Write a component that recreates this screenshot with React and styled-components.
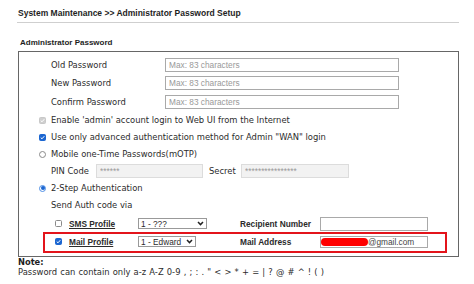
import React from 'react';
import styled, { createGlobalStyle } from 'styled-components';

const Global = createGlobalStyle`
  html, body { margin: 0; padding: 0; background: #fff; }
  body { width: 474px; height: 284px; overflow: hidden; }
`;

const Page = styled.div`
  width: 474px;
  height: 284px;
  box-sizing: border-box;
  padding: 0 15px 0 18px;
  color: #2b2b2b;
  font-family: "DejaVu Sans", Verdana, sans-serif;
`;

const Header = styled.div`
  margin-left: -1px;
  padding: 8px 0 0 1px;
  height: 14px;
  border-bottom: 1px solid #cfcfcf;
  font: bold 8.5px/10px "Liberation Sans", Arial, sans-serif;
  color: #1e1e1e;
  white-space: nowrap;
`;

const SectionTitle = styled.div`
  margin: 15px 0 3px 0;
  padding-left: 2px;
  font: bold 8px/10px "Liberation Sans", Arial, sans-serif;
  color: #1e1e1e;
`;

const Box = styled.div`
  width: 441px;
  box-sizing: border-box;
  border: 1px solid #666;
  padding: 4px 0 3px 0;
`;

const Row = styled.div`
  display: flex;
  align-items: center;
  height: ${p => p.$h}px;
  padding-left: ${p => p.$pl}px;
  margin-top: ${p => p.$mt || 0}px;
  font-size: 8.4px;
  white-space: nowrap;
`;

const Label = styled.span`
  width: ${p => p.$w}px;
  margin-left: ${p => p.$ml || 0}px;
  flex: none;
`;

const TextInput = styled.input`
  box-sizing: border-box;
  width: ${p => p.$w}px;
  height: 14px;
  margin: 0;
  padding: 0 3px;
  border: 1px solid ${p => (p.disabled ? '#dcdcdc' : '#a9a9a9')};
  background: ${p => (p.disabled ? '#f2f2f2' : '#fff')};
  font: 8.3px "Liberation Sans", Arial, sans-serif;
  color: #999;
  outline: none;
  &::placeholder { color: #999; }
`;

const Check = styled.span`
  box-sizing: border-box;
  width: 7px;
  height: 7px;
  flex: none;
  border-radius: 1.5px;
  border: 1px solid ${p => (p.$on ? (p.$dis ? '#c8c8c8' : '#1b66d1') : '#8a8a8a')};
  background: ${p => (p.$on ? (p.$dis ? '#cfcfcf' : '#1b66d1') : '#fff')};
  display: flex;
  align-items: center;
  justify-content: center;
  margin-right: ${p => p.$mr ?? 5}px;
`;

const Radio = styled.span`
  box-sizing: border-box;
  width: 7px;
  height: 7px;
  flex: none;
  border-radius: 50%;
  border: 1px solid ${p => (p.$on ? '#4f8fe6' : '#8a8a8a')};
  background: #fff;
  display: flex;
  align-items: center;
  justify-content: center;
  margin-right: 5px;
  &::after {
    content: '';
    display: ${p => (p.$on ? 'block' : 'none')};
    width: 4px;
    height: 4px;
    border-radius: 50%;
    background: #1b66d1;
  }
`;

const CheckBox = ({ on, dis, mr }) => (
  <Check $on={on} $dis={dis} $mr={mr}>
    {on && (
      <svg width="5" height="5" viewBox="0 0 10 10">
        <polyline points="1.5,5.2 4,7.6 8.6,2.4" fill="none" stroke="#fff" strokeWidth="2" />
      </svg>
    )}
  </Check>
);

const ProfileLink = styled.span`
  width: 69px;
  flex: none;
  font: bold 8.3px "Liberation Sans", Arial, sans-serif;
  text-decoration: underline;
  color: #2b2b2b;
`;

const BoldLabel = styled.span`
  width: ${p => p.$w}px;
  flex: none;
  font: bold 8.3px "Liberation Sans", Arial, sans-serif;
  color: #2b2b2b;
`;

const SelectCell = styled.span`
  width: 102px;
  flex: none;
  display: flex;
  align-items: center;
`;

const Select = styled.span`
  box-sizing: border-box;
  width: ${p => p.$w}px;
  height: 11px;
  border: 1px solid #999;
  display: flex;
  align-items: center;
  justify-content: space-between;
  padding: 0 2px 0 2px;
  font: 8.3px "Liberation Sans", Arial, sans-serif;
  color: #2b2b2b;
`;

const Chevron = () => (
  <svg width="7" height="5" viewBox="0 0 8 6">
    <polyline points="1,1.3 4,4.3 7,1.3" fill="none" stroke="#222" strokeWidth="1.8" />
  </svg>
);

const FakeInput = styled.span`
  box-sizing: border-box;
  width: 108px;
  height: ${p => p.$h}px;
  border: 1px solid #a9a9a9;
  background: #fff;
  display: flex;
  align-items: center;
  font: 8.3px "Liberation Sans", Arial, sans-serif;
  color: #444;
`;

const Redact = styled.span`
  width: 47px;
  height: 8px;
  border-radius: 4px;
  background: #ff0000;
  flex: none;
`;

const RedBox = styled.div`
  margin-left: 24px;
  width: 404px;
  box-sizing: border-box;
  border: 2px solid #e3141b;
  padding: 0 0 2px 10px;
`;

const NoteTitle = styled.div`
  height: 10px;
  font: bold 8.3px/10px "DejaVu Sans", Verdana, sans-serif;
  color: #1e1e1e;
`;

const NoteText = styled.div`
  height: 10px;
  line-height: 10px;
  font-size: 8.4px;
  word-spacing: 0.5px;
  color: #2b2b2b;
  white-space: nowrap;
`;

export default function App() {
  return (
    <>
      <Global />
      <Page>
        <Header>System Maintenance &gt;&gt; Administrator Password Setup</Header>
        <SectionTitle>Administrator Password</SectionTitle>
        <Box>
          <Row $h={18} $pl={32}>
            <Label $w={114}>Old Password</Label>
            <TextInput $w={234} readOnly placeholder="Max: 83 characters" />
          </Row>
          <Row $h={18} $pl={32}>
            <Label $w={114}>New Password</Label>
            <TextInput $w={234} readOnly placeholder="Max: 83 characters" />
          </Row>
          <Row $h={19} $pl={32}>
            <Label $w={114}>Confirm Password</Label>
            <TextInput $w={234} readOnly placeholder="Max: 83 characters" />
          </Row>
          <Row $h={18} $pl={20}>
            <CheckBox on dis />
            <span>Enable 'admin' account login to Web UI from the Internet</span>
          </Row>
          <Row $h={16} $pl={20}>
            <CheckBox on />
            <span>Use only advanced authentication method for Admin "WAN" login</span>
          </Row>
          <Row $h={18} $pl={20}>
            <Radio />
            <span>Mobile one-Time Passwords(mOTP)</span>
          </Row>
          <Row $h={16} $pl={32}>
            <Label $w={45}>PIN Code</Label>
            <TextInput $w={107} disabled value="******" readOnly />
            <Label $w={32} $ml={6}>Secret</Label>
            <TextInput $w={108} disabled value="****************" readOnly />
          </Row>
          <Row $h={18} $pl={20}>
            <Radio $on />
            <span>2-Step Authentication</span>
          </Row>
          <Row $h={16} $pl={32}>
            <span>Send Auth code via</span>
          </Row>
          <Row $h={17} $pl={36} $mt={2}>
            <CheckBox mr={7} />
            <ProfileLink>SMS Profile</ProfileLink>
            <SelectCell>
              <Select $w={69}>
                <span>1 - ???</span>
                <Chevron />
              </Select>
            </SelectCell>
            <BoldLabel $w={80}>Recipient Number</BoldLabel>
            <FakeInput $h={14} />
          </Row>
          <RedBox>
            <Row $h={15} $pl={0}>
              <CheckBox on mr={7} />
              <ProfileLink>Mail Profile</ProfileLink>
              <SelectCell>
                <Select $w={58}>
                  <span>1 - Edward</span>
                  <Chevron />
                </Select>
              </SelectCell>
              <BoldLabel $w={80}>Mail Address</BoldLabel>
              <FakeInput $h={12}>
                <Redact />
                <span>@gmail.com</span>
              </FakeInput>
            </Row>
          </RedBox>
        </Box>
        <NoteTitle>Note:</NoteTitle>
        <NoteText>Password can contain only a-z A-Z 0-9 , ; : . " &lt; &gt; * + = | ? @ # ^ ! ( )</NoteText>
      </Page>
    </>
  );
}
